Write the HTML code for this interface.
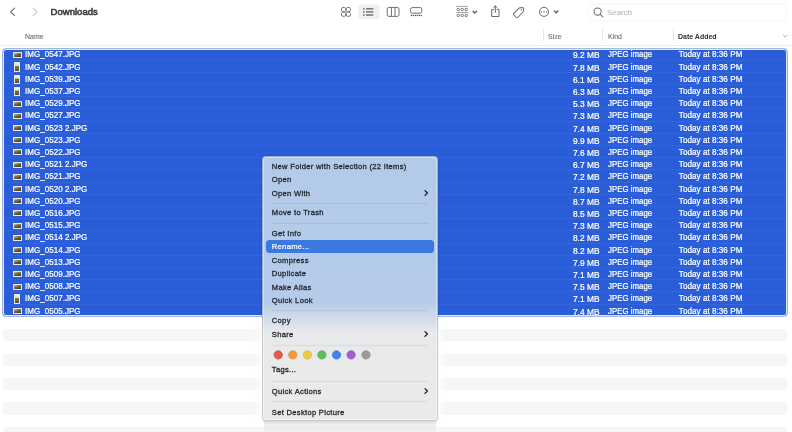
<!DOCTYPE html>
<html><head><meta charset="utf-8">
<style>
*{box-sizing:border-box;margin:0;padding:0}
html,body{width:792px;height:432px;overflow:hidden;background:#fff;font-family:"Liberation Sans",sans-serif;position:relative}
.abs{position:absolute}
#wrap{position:absolute;left:0;top:0;width:792px;height:432px;will-change:transform}
.t{position:absolute;white-space:nowrap;line-height:1}
#title{left:50.6px;top:7.0px;font-size:9.55px;color:#3a3a3a;-webkit-text-stroke:0.55px #3a3a3a}
.hdr{position:absolute;top:31.6px;font-size:7px;color:#7c7c7c;-webkit-text-stroke:0.18px #7c7c7c;transform:scaleY(1.15);transform-origin:0 0;white-space:nowrap;line-height:1}
.hsep{position:absolute;top:29.1px;width:1px;height:12px;background:#e6e6e6}
#hline{left:0;top:44.6px;width:792px;height:1px;background:#ededed}
.stripe{position:absolute;left:3px;width:784px;height:12.2px;background:#f5f6f6;border-radius:3px}
#sel{position:absolute;left:2.6px;top:48.7px;width:784.6px;height:267px;background:#2a5dd8;border-radius:3px;border:1px solid #dbe7ff;box-shadow:0 0 0 0.8px #8aa0d0}
.sepl{position:absolute;left:3.5px;width:783px;height:1px;background:rgba(255,255,255,0.055)}
.row{position:absolute;left:0;width:792px;height:12.2px;color:#fff;font-size:8px}
.row span{position:absolute;top:2.7px;white-space:nowrap;line-height:1;-webkit-text-stroke:0.22px #fff;letter-spacing:0.04px;transform:scaleY(1.1);transform-origin:0 0}
.nm{left:25px}
.sz{right:192.3px;font-size:8.4px;text-align:right}
.kd{left:608px;font-size:7.8px}
.dt{left:678.8px;font-size:8.1px}
.ico{position:absolute;left:12.7px;top:4.2px;width:9px;height:6px;background:linear-gradient(160deg,#d8d0b8 0%,#8a7848 35%,#5e4e2a 70%,#4a3c22 100%);border:0.8px solid #e6e8ee}
.ico.p{left:13.7px;top:2.6px;width:6.2px;height:9.3px;background:linear-gradient(#f2efe6 0%,#e8e0cc 30%,#6a5a30 48%,#7a6a40 70%,#4e4024 100%)}

#menu{position:absolute;left:0;top:0;width:792px;height:432px;pointer-events:none}
#menubg{position:absolute;left:262.2px;top:155.8px;width:175.5px;height:265.4px;border-radius:4px;
 background:linear-gradient(#b4cae9 0px,#b5cbe9 146px,#e8e9ea 176px,#ebebeb 264px) border-box;
 border:0.6px solid rgba(0,0,0,0.13);box-shadow:inset 0 0 0 0.9px rgba(255,255,255,0.4),0 0 2.5px rgba(0,0,20,0.2)}
.mi{position:absolute;left:271.8px;font-size:7.6px;letter-spacing:0.3px;line-height:1;color:#1e222a;white-space:nowrap;-webkit-text-stroke:0.28px #1e222a}
.ms{position:absolute;left:271.5px;width:156px;height:1px;background:rgba(0,0,0,0.065)}
.chev{position:absolute;left:422.5px}
#hl{position:absolute;left:266.2px;top:240.1px;width:168px;height:13px;border-radius:3.5px;background:#3b78e0}
</style></head><body><div id="wrap">

<!-- toolbar -->
<svg class="abs" style="left:0;top:0" width="792" height="26" viewBox="0 0 792 26">
  <g fill="none" stroke-linecap="round" stroke-linejoin="round">
  <path d="M14.6 8.2 L10.7 11.8 L14.6 15.4" stroke="#6e6e6e" stroke-width="1.15"/>
  <path d="M33.3 8.2 L37.1 11.8 L33.3 15.4" stroke="#c6c6c6" stroke-width="1.15"/>
  </g>
  <rect x="358" y="4.4" width="21.6" height="14.9" rx="3.5" fill="#f1f1f1"/>
  <g fill="none" stroke="#7a7a7a" stroke-width="1">
    <rect x="341.5" y="7.5" width="4.1" height="4.1" rx="1.3"/>
    <rect x="346.3" y="7.5" width="4.1" height="4.1" rx="1.3"/>
    <rect x="341.5" y="12.2" width="4.1" height="4.1" rx="1.3"/>
    <rect x="346.3" y="12.2" width="4.1" height="4.1" rx="1.3"/>
  </g>
  <g fill="none" stroke="#707070" stroke-width="1">
    <rect x="387.2" y="7.4" width="11.8" height="9" rx="1.6"/>
    <path d="M391.4 7.4 V16.4 M395 7.4 V16.4"/>
    <rect x="410.6" y="7.6" width="11.2" height="5.6" rx="1.6"/>
  </g>
  <g fill="#5a5a5a">
    <rect x="363" y="8.2" width="1.6" height="1.3"/><rect x="366" y="8.2" width="7.3" height="1.25"/>
    <rect x="363" y="11.3" width="1.6" height="1.3"/><rect x="366" y="11.3" width="7.3" height="1.25"/>
    <rect x="363" y="14.4" width="1.6" height="1.3"/><rect x="366" y="14.4" width="7.3" height="1.25"/>
  </g>
  <g fill="#505050"><rect x="410.80" y="14.8" width="1.25" height="1.3"/><rect x="412.75" y="14.8" width="1.25" height="1.3"/><rect x="414.70" y="14.8" width="1.25" height="1.3"/><rect x="416.65" y="14.8" width="1.25" height="1.3"/><rect x="418.60" y="14.8" width="1.25" height="1.3"/><rect x="420.55" y="14.8" width="1.25" height="1.3"/></g>
  <!-- group -->
  <g fill="none" stroke="#6c6c6c" stroke-width="0.95">
    <path d="M456.1 6.35 H468.1 M456.1 12.45 H468.1" stroke="#8a8a8a" stroke-width="0.8"/>
    <circle cx="458.3" cy="9.5" r="1.25"/><circle cx="462.25" cy="9.5" r="1.25"/><circle cx="466.2" cy="9.5" r="1.25"/>
    <circle cx="458.3" cy="15.4" r="1.25"/><circle cx="462.25" cy="15.4" r="1.25"/><circle cx="466.2" cy="15.4" r="1.25"/>
  </g>
  <g fill="none" stroke="#555" stroke-width="1.25" stroke-linecap="round" stroke-linejoin="round">
    <path d="M472.9 11.1 L474.8 13 L476.7 11.1"/>
    <path d="M554.4 10.9 L556.25 12.8 L558.1 10.9"/>
  </g>
  <!-- share -->
  <g fill="none" stroke="#6a6a6a" stroke-width="1" stroke-linecap="round" stroke-linejoin="round">
    <path d="M493.5 9.6 H491.7 V16.5 H499 V9.6 H497.2"/>
    <path d="M495.35 12.4 V6 M493.5 7.8 L495.35 6 L497.2 7.8"/>
  </g>
  <!-- tag -->
  <g transform="translate(519.1 12) rotate(45)" fill="none" stroke="#6a6a6a" stroke-width="1" stroke-linejoin="round">
    <path d="M-2.8 5 Q-2.8 5.8 -2 5.8 H2 Q2.8 5.8 2.8 5 V-2.8 L1 -5.5 Q0 -6.4 -1 -5.5 L-2.8 -2.8 Z"/>
    <circle cx="0" cy="-3.1" r="0.65" fill="#6a6a6a" stroke="none"/>
  </g>
  <!-- ellipsis circle -->
  <circle cx="544" cy="11.85" r="4.55" fill="none" stroke="#6a6a6a" stroke-width="1"/>
  <g fill="#4a4a4a"><circle cx="541.5" cy="11.85" r="0.68"/><circle cx="544" cy="11.85" r="0.68"/><circle cx="546.5" cy="11.85" r="0.68"/></g>
  <!-- search -->
  <rect x="588.3" y="4.3" width="198" height="16.4" rx="4" fill="#fff" stroke="#f1f1f1" stroke-width="0.8"/>
  <g fill="none" stroke="#6a6a6a" stroke-width="1.05" stroke-linecap="round">
    <circle cx="597.6" cy="11.6" r="3.6"/>
    <path d="M600.3 14.3 L603 17"/>
  </g>
</svg>
<div class="t" id="title">Downloads</div>
<div class="t" style="left:607px;top:9.3px;font-size:7.9px;color:#bdbdbd;-webkit-text-stroke:0.15px #bdbdbd">Search</div>

<!-- headers -->
<div class="hdr" style="left:25px">Name</div>
<div class="hsep" style="left:542.8px"></div>
<div class="hdr" style="left:548px">Size</div>
<div class="hsep" style="left:602.1px"></div>
<div class="hdr" style="left:608px">Kind</div>
<div class="hsep" style="left:673px"></div>
<div class="hdr" style="left:678px;top:31.8px;color:#333;font-weight:bold;-webkit-text-stroke:0">Date Added</div>
<div id="hline" class="abs"></div>
<svg class="abs" style="left:778px;top:30px" width="14" height="12" viewBox="778 30 14 12"><path d="M783.2 35.1 L785.2 37.1 L787.2 35.1" fill="none" stroke="#a0a0a0" stroke-width="0.9" stroke-linecap="round" stroke-linejoin="round"/></svg>

<!-- stripes -->
<div class="stripe" style="top:329.2px"></div>
<div class="stripe" style="top:353.6px"></div>
<div class="stripe" style="top:378px"></div>
<div class="stripe" style="top:402.4px"></div>
<div class="stripe" style="top:426.8px"></div>

<div id="sel"></div>
<div class="row" style="top:47.70px"><b class="ico"></b><span class="nm">IMG_0547.JPG</span><span class="sz">9.2 MB</span><span class="kd">JPEG image</span><span class="dt">Today at 8:36 PM</span></div>
<i class="sepl" style="top:59.50px"></i>
<div class="row" style="top:59.90px"><b class="ico p"></b><span class="nm">IMG_0542.JPG</span><span class="sz">7.8 MB</span><span class="kd">JPEG image</span><span class="dt">Today at 8:36 PM</span></div>
<i class="sepl" style="top:71.70px"></i>
<div class="row" style="top:72.10px"><b class="ico p"></b><span class="nm">IMG_0539.JPG</span><span class="sz">6.1 MB</span><span class="kd">JPEG image</span><span class="dt">Today at 8:36 PM</span></div>
<i class="sepl" style="top:83.90px"></i>
<div class="row" style="top:84.30px"><b class="ico p"></b><span class="nm">IMG_0537.JPG</span><span class="sz">6.3 MB</span><span class="kd">JPEG image</span><span class="dt">Today at 8:36 PM</span></div>
<i class="sepl" style="top:96.10px"></i>
<div class="row" style="top:96.50px"><b class="ico"></b><span class="nm">IMG_0529.JPG</span><span class="sz">5.3 MB</span><span class="kd">JPEG image</span><span class="dt">Today at 8:36 PM</span></div>
<i class="sepl" style="top:108.30px"></i>
<div class="row" style="top:108.70px"><b class="ico"></b><span class="nm">IMG_0527.JPG</span><span class="sz">7.3 MB</span><span class="kd">JPEG image</span><span class="dt">Today at 8:36 PM</span></div>
<i class="sepl" style="top:120.50px"></i>
<div class="row" style="top:120.90px"><b class="ico"></b><span class="nm">IMG_0523 2.JPG</span><span class="sz">7.4 MB</span><span class="kd">JPEG image</span><span class="dt">Today at 8:36 PM</span></div>
<i class="sepl" style="top:132.70px"></i>
<div class="row" style="top:133.10px"><b class="ico"></b><span class="nm">IMG_0523.JPG</span><span class="sz">9.9 MB</span><span class="kd">JPEG image</span><span class="dt">Today at 8:36 PM</span></div>
<i class="sepl" style="top:144.90px"></i>
<div class="row" style="top:145.30px"><b class="ico"></b><span class="nm">IMG_0522.JPG</span><span class="sz">7.6 MB</span><span class="kd">JPEG image</span><span class="dt">Today at 8:36 PM</span></div>
<i class="sepl" style="top:157.10px"></i>
<div class="row" style="top:157.50px"><b class="ico"></b><span class="nm">IMG_0521 2.JPG</span><span class="sz">6.7 MB</span><span class="kd">JPEG image</span><span class="dt">Today at 8:36 PM</span></div>
<i class="sepl" style="top:169.30px"></i>
<div class="row" style="top:169.70px"><b class="ico"></b><span class="nm">IMG_0521.JPG</span><span class="sz">7.2 MB</span><span class="kd">JPEG image</span><span class="dt">Today at 8:36 PM</span></div>
<i class="sepl" style="top:181.50px"></i>
<div class="row" style="top:181.90px"><b class="ico"></b><span class="nm">IMG_0520 2.JPG</span><span class="sz">7.8 MB</span><span class="kd">JPEG image</span><span class="dt">Today at 8:36 PM</span></div>
<i class="sepl" style="top:193.70px"></i>
<div class="row" style="top:194.10px"><b class="ico"></b><span class="nm">IMG_0520.JPG</span><span class="sz">8.7 MB</span><span class="kd">JPEG image</span><span class="dt">Today at 8:36 PM</span></div>
<i class="sepl" style="top:205.90px"></i>
<div class="row" style="top:206.30px"><b class="ico"></b><span class="nm">IMG_0516.JPG</span><span class="sz">8.5 MB</span><span class="kd">JPEG image</span><span class="dt">Today at 8:36 PM</span></div>
<i class="sepl" style="top:218.10px"></i>
<div class="row" style="top:218.50px"><b class="ico"></b><span class="nm">IMG_0515.JPG</span><span class="sz">7.3 MB</span><span class="kd">JPEG image</span><span class="dt">Today at 8:36 PM</span></div>
<i class="sepl" style="top:230.30px"></i>
<div class="row" style="top:230.70px"><b class="ico"></b><span class="nm">IMG_0514 2.JPG</span><span class="sz">8.2 MB</span><span class="kd">JPEG image</span><span class="dt">Today at 8:36 PM</span></div>
<i class="sepl" style="top:242.50px"></i>
<div class="row" style="top:242.90px"><b class="ico"></b><span class="nm">IMG_0514.JPG</span><span class="sz">8.2 MB</span><span class="kd">JPEG image</span><span class="dt">Today at 8:36 PM</span></div>
<i class="sepl" style="top:254.70px"></i>
<div class="row" style="top:255.10px"><b class="ico"></b><span class="nm">IMG_0513.JPG</span><span class="sz">7.9 MB</span><span class="kd">JPEG image</span><span class="dt">Today at 8:36 PM</span></div>
<i class="sepl" style="top:266.90px"></i>
<div class="row" style="top:267.30px"><b class="ico"></b><span class="nm">IMG_0509.JPG</span><span class="sz">7.1 MB</span><span class="kd">JPEG image</span><span class="dt">Today at 8:36 PM</span></div>
<i class="sepl" style="top:279.10px"></i>
<div class="row" style="top:279.50px"><b class="ico"></b><span class="nm">IMG_0508.JPG</span><span class="sz">7.5 MB</span><span class="kd">JPEG image</span><span class="dt">Today at 8:36 PM</span></div>
<i class="sepl" style="top:291.30px"></i>
<div class="row" style="top:291.70px"><b class="ico p"></b><span class="nm">IMG_0507.JPG</span><span class="sz">7.1 MB</span><span class="kd">JPEG image</span><span class="dt">Today at 8:36 PM</span></div>
<i class="sepl" style="top:303.50px"></i>
<div class="row" style="top:303.90px"><b class="ico"></b><span class="nm">IMG_0505.JPG</span><span class="sz">7.4 MB</span><span class="kd">JPEG image</span><span class="dt">Today at 8:36 PM</span></div>


<div id="menubg"></div>
<div class="abs" style="left:255px;top:318px;width:7.2px;height:106px;background:linear-gradient(to right,rgba(255,255,255,0),rgba(255,255,255,0.85))"></div>
<div class="abs" style="left:437.7px;top:318px;width:8px;height:106px;background:linear-gradient(to left,rgba(255,255,255,0),rgba(255,255,255,0.85))"></div>
<div class="abs" style="left:264px;top:421.2px;width:172px;height:11px;background:linear-gradient(rgba(0,0,0,0.1),rgba(0,0,0,0.02))"></div>
<div id="menu">
  <div class="mi" style="top:162.87px">New Folder with Selection (22 Items)</div>
  <div class="mi" style="top:176.27px">Open</div>
  <div class="mi" style="top:189.67px">Open With</div>
  <svg class="chev" style="top:189.2px" width="6" height="8" viewBox="0 0 6 8"><path d="M2 1.6 L4.4 4 L2 6.4" fill="none" stroke="#1a1a1a" stroke-width="1.3" stroke-linecap="round" stroke-linejoin="round"/></svg>
  <div class="ms" style="top:202.8px"></div>
  <div class="mi" style="top:209.47px">Move to Trash</div>
  <div class="ms" style="top:222.9px"></div>
  <div class="mi" style="top:229.77px">Get Info</div>
  <div id="hl"></div>
  <div class="mi" style="top:243.17px;color:#fff;-webkit-text-stroke:0.22px #fff">Rename...</div>
  <div class="mi" style="top:256.57px">Compress</div>
  <div class="mi" style="top:270.07px">Duplicate</div>
  <div class="mi" style="top:283.57px">Make Alias</div>
  <div class="mi" style="top:297.07px">Quick Look</div>
  <div class="ms" style="top:310px"></div>
  <div class="mi" style="top:317.37px">Copy</div>
  <div class="mi" style="top:330.67px">Share</div>
  <svg class="chev" style="top:330.1px" width="6" height="8" viewBox="0 0 6 8"><path d="M2 1.6 L4.4 4 L2 6.4" fill="none" stroke="#1a1a1a" stroke-width="1.3" stroke-linecap="round" stroke-linejoin="round"/></svg>
  <div class="ms" style="top:344.6px"></div>
  <svg class="abs" style="left:270px;top:349px" width="110" height="12" viewBox="270 349 110 12"><circle cx="278.2" cy="354.9" r="4.15" fill="#e35a4f" stroke="#c94840" stroke-width="0.7"/><circle cx="292.8" cy="354.9" r="4.15" fill="#ee9f3c" stroke="#d4892e" stroke-width="0.7"/><circle cx="307.4" cy="354.9" r="4.15" fill="#f4c843" stroke="#dcb035" stroke-width="0.7"/><circle cx="321.9" cy="354.9" r="4.15" fill="#5cbf5b" stroke="#4aa84a" stroke-width="0.7"/><circle cx="336.5" cy="354.9" r="4.15" fill="#3f84ee" stroke="#3070d6" stroke-width="0.7"/><circle cx="351.1" cy="354.9" r="4.15" fill="#a45ed2" stroke="#8e4cba" stroke-width="0.7"/><circle cx="366.0" cy="354.9" r="4.15" fill="#9b9b9b" stroke="#858585" stroke-width="0.7"/></svg>
  <div class="mi" style="top:366.3px">Tags...</div>
  <div class="ms" style="top:380.5px"></div>
  <div class="mi" style="top:388.17px">Quick Actions</div>
  <svg class="chev" style="top:387px" width="6" height="8" viewBox="0 0 6 8"><path d="M2 1.6 L4.4 4 L2 6.4" fill="none" stroke="#1a1a1a" stroke-width="1.3" stroke-linecap="round" stroke-linejoin="round"/></svg>
  <div class="ms" style="top:401px"></div>
  <div class="mi" style="top:408.6px">Set Desktop Picture</div>
</div>
</div></body></html>
